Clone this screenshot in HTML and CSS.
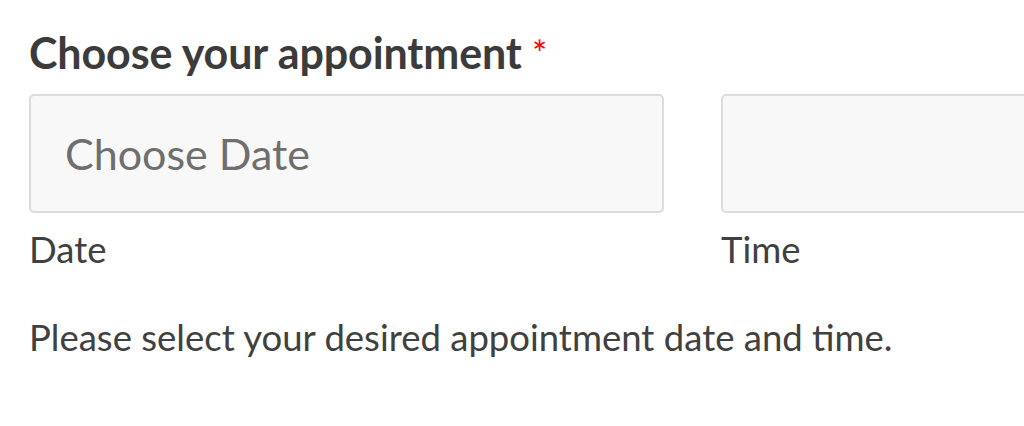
FILE: index.html
```html
<!DOCTYPE html>
<html>
<head>
<meta charset="utf-8">
<link rel="stylesheet" href="styles.css">
</head>
<body>
<div class="field">
  <div class="legend">Choose your appointment <span class="req">*</span></div>
  <div class="row">
    <div class="col">
      <div class="input"><span class="placeholder">Choose Date</span></div>
      <div class="sublabel">Date</div>
    </div>
    <div class="col">
      <div class="input"></div>
      <div class="sublabel">Time</div>
    </div>
  </div>
  <div class="desc">Please select your desired appointment date and time.</div>
</div>
</body>
</html>
```
FILE: styles.css
```css
html, body {
  margin: 0;
  padding: 0;
  background: #fff;
  overflow: hidden;
  width: 1024px;
  height: 426px;
}
body {
  font-family: Lato, "Open Sans", sans-serif;
  color: #404040;
}
.field {
  padding: 24px 0 0 29px;
  width: 1400px;
}
.legend {
  font-weight: 700;
  font-size: 43px;
  line-height: 58px;
  letter-spacing: -0.1px;
  color: #3b3b3b;
}
.req {
  color: #ff0000;
  font-weight: 400;
  font-size: 36px;
  vertical-align: top;
}
.row {
  display: grid;
  grid-template-columns: 635px 635px;
  column-gap: 57px;
  margin-top: 12px;
}
.input {
  box-sizing: border-box;
  height: 119px;
  border: 2px solid #dcdcdc;
  border-radius: 5px;
  background: #f8f8f8;
  display: flex;
  align-items: center;
  padding-left: 34px;
}
.placeholder {
  font-size: 43px;
  color: #6e6e6e;
}
.sublabel {
  font-size: 36.5px;
  line-height: 44px;
  margin-top: 14px;
}
.desc {
  font-size: 36.5px;
  line-height: 44px;
  margin-top: 44px;
}
```
